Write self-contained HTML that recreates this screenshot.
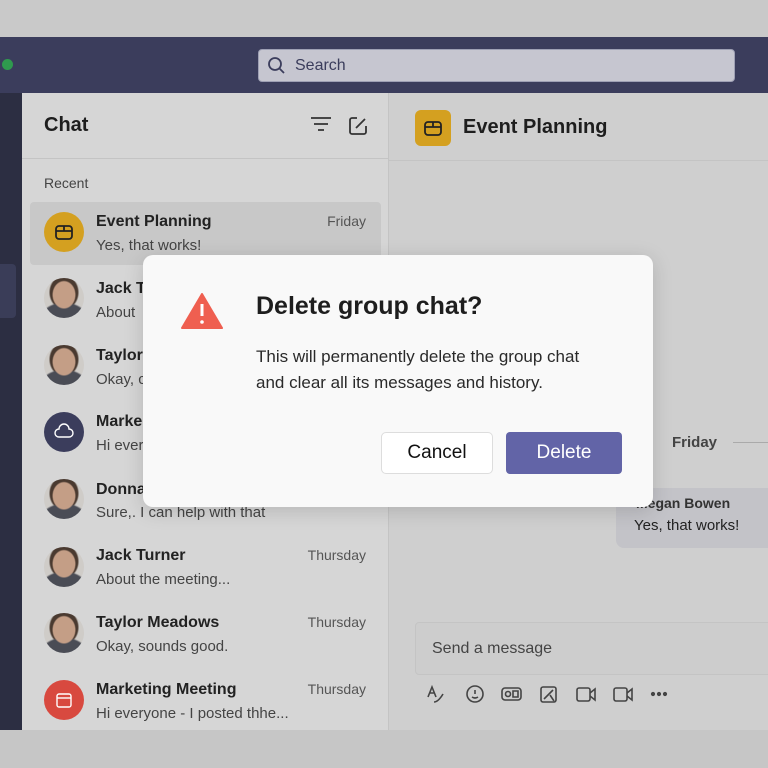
<!DOCTYPE html>
<html><head><style>
*{margin:0;padding:0;box-sizing:border-box}
body{width:768px;height:768px;overflow:hidden;background:#c9c9c9;font-family:"Liberation Sans",sans-serif;position:relative;color:#1e1e1e}
.a{position:absolute}
.av{position:absolute;left:44px;width:40px;height:40px;border-radius:50%;overflow:hidden}
.nm{position:absolute;left:96px;font-size:16px;font-weight:bold;color:#222}
.ms{position:absolute;left:96px;font-size:15px;color:#444}
.dt{position:absolute;right:402px;font-size:14px;color:#555}
.face{background:radial-gradient(ellipse 30% 36% at 50% 42%,#c49e86 0 90%,transparent 100%),radial-gradient(ellipse 60% 40% at 50% 100%,#4a4c55 0 90%,transparent 100%),radial-gradient(ellipse 38% 44% at 50% 36%,#4a3a30 0 90%,transparent 100%),#cfccc8}
</style></head><body>
<div class="a" style="left:0;top:37px;width:768px;height:56px;background:#3b3d5c"></div>
<div class="a" style="left:2px;top:59px;width:11px;height:11px;border-radius:50%;background:#2f9a4e"></div>
<div class="a" style="left:258px;top:49px;width:477px;height:33px;border-radius:4px;background:#c6c6d0;border:1px solid #9ea0b4"></div>
<svg class="a" style="left:267px;top:56px" width="20" height="20" viewBox="0 0 20 20"><circle cx="8" cy="8" r="6" fill="none" stroke="#3b3d5c" stroke-width="1.8"/><path d="M12.5 12.5L17 17" stroke="#3b3d5c" stroke-width="1.8"/></svg>
<div class="a" style="left:295px;top:57px;font-size:16px;color:#3b3d5c">Search</div>
<div class="a" style="left:0;top:93px;width:22px;height:637px;background:#2c2e42"></div>
<div class="a" style="left:0;top:264px;width:16px;height:54px;background:#3a3d58;border-radius:0 4px 4px 0"></div>
<div class="a" style="left:22px;top:93px;width:367px;height:637px;background:#d6d6d6"></div>
<div class="a" style="left:389px;top:93px;width:379px;height:637px;background:#cfcfcf"></div>
<div class="a" style="left:388px;top:93px;width:1px;height:637px;background:#c4c4c4"></div>
<div class="a" style="left:22px;top:158px;width:367px;height:1px;background:#c4c4c4"></div>
<div class="a" style="left:389px;top:160px;width:379px;height:1px;background:#c4c4c4"></div>
<div class="a" style="left:44px;top:114px;font-size:20px;font-weight:bold">Chat</div>
<svg class="a" style="left:310px;top:116px" width="22" height="18"><path d="M1 2h20M4 8h14M8 14h6" stroke="#333" stroke-width="1.8"/></svg>
<svg class="a" style="left:348px;top:116px" width="20" height="20"><path d="M9 2H4a2 2 0 0 0-2 2v12a2 2 0 0 0 2 2h12a2 2 0 0 0 2-2v-6" fill="none" stroke="#333" stroke-width="1.8"/><path d="M8 12l9-9" stroke="#333" stroke-width="1.8"/></svg>
<div class="a" style="left:44px;top:175px;font-size:14px;color:#444">Recent</div>
<div class="a" style="left:30px;top:202px;width:351px;height:63px;background:#c8c8c8;border-radius:4px"></div>
<div class="av" style="top:212px;background:#d4a020"></div>
<svg class="a" style="left:54px;top:222px" width="20" height="20"><rect x="2" y="4" width="16" height="13" rx="3" fill="none" stroke="#222" stroke-width="1.8"/><path d="M2 9h16M10 4v5" stroke="#222" stroke-width="1.8"/></svg>
<div class="nm" style="top:213px">Event Planning</div><div class="ms" style="top:237px">Yes, that works!</div><div class="dt" style="top:213px">Friday</div>
<div class="av face" style="top:278px"></div><div class="nm" style="top:280px">Jack T</div><div class="ms" style="top:304px">About</div>
<div class="av face" style="top:345px"></div><div class="nm" style="top:347px">Taylor</div><div class="ms" style="top:371px">Okay, c</div>
<div class="av" style="top:412px;background:#3b3d5c"></div>
<svg class="a" style="left:54px;top:422px" width="20" height="20"><path d="M5 15a4 4 0 0 1 0-8 5 5 0 0 1 10 0 4 4 0 0 1 0 8z" fill="none" stroke="#fff" stroke-width="1.4"/></svg>
<div class="nm" style="top:413px">Marke</div><div class="ms" style="top:437px">Hi ever</div>
<div class="av face" style="top:479px"></div><div class="nm" style="top:481px">Donna</div><div class="ms" style="top:504px">Sure,. I can help with that</div>
<div class="av face" style="top:547px"></div><div class="nm" style="top:547px">Jack Turner</div><div class="ms" style="top:571px">About the meeting...</div><div class="dt" style="top:547px">Thursday</div>
<div class="av face" style="top:613px"></div><div class="nm" style="top:614px">Taylor Meadows</div><div class="ms" style="top:638px">Okay, sounds good.</div><div class="dt" style="top:614px">Thursday</div>
<div class="av" style="top:680px;background:#d8493f"></div>
<svg class="a" style="left:55px;top:691px" width="18" height="18"><rect x="2" y="3" width="14" height="13" rx="2" fill="none" stroke="#fff" stroke-width="1.4"/><path d="M2 7h14" stroke="#fff" stroke-width="1.4"/></svg>
<div class="nm" style="top:681px">Marketing Meeting</div><div class="ms" style="top:705px">Hi everyone - I posted thhe...</div><div class="dt" style="top:681px">Thursday</div>
<div class="a" style="left:415px;top:110px;width:36px;height:36px;border-radius:6px;background:#d4a020"></div>
<svg class="a" style="left:423px;top:118px" width="20" height="20"><rect x="2" y="4" width="16" height="13" rx="3" fill="none" stroke="#222" stroke-width="1.8"/><path d="M2 9h16M10 4v5" stroke="#222" stroke-width="1.8"/></svg>
<div class="a" style="left:463px;top:116px;font-size:20px;font-weight:bold">Event Planning</div>
<div class="a" style="left:733px;top:442px;width:35px;height:1px;background:#aaa"></div>
<div class="a" style="left:672px;top:434px;font-size:15px;color:#444;font-weight:bold">Friday</div>
<div class="a" style="left:616px;top:488px;width:160px;height:60px;background:#c3c3c8;border-radius:8px"></div>
<div class="a" style="left:636px;top:495px;font-size:14px;font-weight:bold;color:#333">Megan Bowen</div>
<div class="a" style="left:634px;top:517px;font-size:15px;color:#222">Yes, that works!</div>
<div class="a" style="left:415px;top:622px;width:360px;height:53px;background:#cdcdcd;border-radius:4px;border:1px solid #c4c4c4"></div>
<div class="a" style="left:432px;top:640px;font-size:16px;color:#444">Send a message</div>
<svg class="a" style="left:426px;top:683px" width="245" height="22" fill="none" stroke="#444" stroke-width="1.6">
<path d="M2 14L6 4l4 10M3.5 10h5M8 19c3 0 6-3 9-8"/>
<circle cx="49" cy="11" r="8"/><path d="M49 7v4M46 14q3 2 6 0"/>
<rect x="76" y="5" width="19" height="12" rx="3"/><circle cx="82" cy="11" r="2.5"/><path d="M87 8h5v6h-5z"/>
<rect x="115" y="4" width="15" height="15" rx="2"/><path d="M118 16l9-9M124 12l4 6"/>
<rect x="151" y="5" width="13" height="13" rx="2"/><path d="M164 10l5-4v11l-5-4"/>
<rect x="188" y="5" width="13" height="13" rx="2"/><path d="M201 10l5-4v11l-5-4"/>
<circle cx="227" cy="11" r="1.3" fill="#444"/><circle cx="233" cy="11" r="1.3" fill="#444"/><circle cx="239" cy="11" r="1.3" fill="#444"/>
</svg>
<div class="a" style="left:0;top:730px;width:768px;height:38px;background:#c6c6c6"></div>
<div class="a" style="left:143px;top:255px;width:510px;height:252px;background:#f9f9f9;border-radius:10px;box-shadow:0 4px 20px rgba(0,0,0,.15)"></div>
<svg class="a" style="left:181px;top:292px" width="42" height="38"><path d="M21 2L41 36H1Z" fill="#ef5f50" stroke="#ef5f50" stroke-width="2" stroke-linejoin="round"/><path d="M21 12v12" stroke="#fff" stroke-width="3"/><circle cx="21" cy="30" r="1.8" fill="#fff"/></svg>
<div class="a" style="left:256px;top:292px;font-size:25px;font-weight:bold;color:#1e1e1e">Delete group chat?</div>
<div class="a" style="left:256px;top:344px;font-size:17px;line-height:26px;color:#2a2a2a">This will permanently delete the group chat<br>and clear all its messages and history.</div>
<div class="a" style="left:381px;top:432px;width:112px;height:42px;background:#fff;border:1px solid #ddd;border-radius:5px;font-size:19px;text-align:center;line-height:40px;color:#111">Cancel</div>
<div class="a" style="left:506px;top:432px;width:116px;height:42px;background:#6264a7;border-radius:4px;font-size:19px;text-align:center;line-height:42px;color:#fff">Delete</div>
</body></html>
